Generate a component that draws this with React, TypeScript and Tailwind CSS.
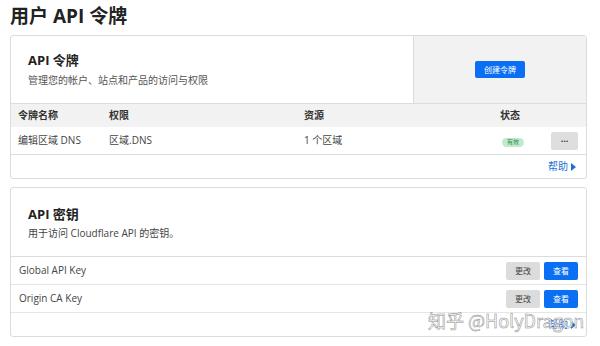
const font = { fontFamily: '"Open Sans", "Noto Sans CJK SC", sans-serif' };

function HelpLink() {
    return (
        <div className="h-[23px] flex items-center justify-end pr-[10px] text-[10px] text-[#1d6fd6]">
            帮助
            <svg className="ml-[3px]" width="5" height="8" viewBox="0 0 5 8">
                <path d="M0 0 L5 4 L0 8 Z" fill="#1d6fd6" />
            </svg>
        </div>
    );
}

const keys = ["Global API Key", "Origin CA Key"];

export default function App() {
    return (
        <div className="relative w-[600px] h-[346px] bg-white text-[#333] overflow-hidden" style={font}>
            <h1 className="pl-[10px] pt-[4px] h-[35px] text-[19px] font-bold leading-[24px] text-[#222]">用户 API 令牌</h1>

            <div className="ml-[10px] w-[577px] border border-[#dcdcdc] rounded-[3px]">
                <div className="flex h-[68px] border-b border-[#dcdcdc]">
                    <div className="flex-1 pl-[17px] pt-[15px]">
                        <div className="text-[13px] font-bold leading-[18px] text-[#222]">API 令牌</div>
                        <div className="mt-[4px] text-[10px] leading-[14px] text-[#555]">管理您的帐户、站点和产品的访问与权限</div>
                    </div>
                    <div className="w-[173px] bg-[#f2f2f2] border-l border-[#dcdcdc] flex items-center justify-center">
                        <button className="w-[50px] h-[17px] bg-[#0b6ff3] text-white text-[8px] rounded-[2px]">创建令牌</button>
                    </div>
                </div>
                <div className="flex items-center h-[23px] bg-[#f2f2f2] pl-[7px] text-[10px] font-bold text-[#333]">
                    <div className="w-[91px]">令牌名称</div>
                    <div className="w-[195px]">权限</div>
                    <div className="w-[196px]">资源</div>
                    <div>状态</div>
                </div>
                <div className="flex items-center h-[28px] pl-[7px] text-[10px] text-[#444] border-b border-[#dcdcdc]">
                    <div className="w-[91px]">编辑区域 DNS</div>
                    <div className="w-[195px]">区域.DNS</div>
                    <div className="w-[196px]">1 个区域</div>
                    <div className="w-[51px] pl-[2px]">
                        <span className="inline-flex items-center justify-center w-[22px] h-[9px] rounded-full bg-[#bfeacd] text-[#2a8a4c] text-[6px]">有效</span>
                    </div>
                    <button className="w-[27px] h-[18px] bg-[#dedede] rounded-[2px] text-[9px] font-bold leading-[10px] text-[#333]">···</button>
                </div>
                <HelpLink />
            </div>

            <div className="ml-[10px] mt-[8px] w-[577px] border border-[#dcdcdc] rounded-[3px]">
                <div className="h-[69px] pl-[17px] pt-[17px] border-b border-[#dcdcdc]">
                    <div className="text-[13px] font-bold leading-[18px] text-[#222]">API 密钥</div>
                    <div className="mt-[3px] text-[10px] leading-[14px] text-[#444]">用于访问 Cloudflare API 的密钥。</div>
                </div>
                {keys.map((k) => (
                    <div key={k} className="flex items-center h-[28px] pl-[8px] pr-[8px] border-b border-[#e6e6e6] last:border-[#dcdcdc] text-[10px] text-[#444]">
                        <div className="flex-1">{k}</div>
                        <button className="w-[34px] h-[18px] bg-[#dcdcdc] rounded-[2px] text-[8px] text-[#444]">更改</button>
                        <button className="ml-[4px] w-[34px] h-[18px] bg-[#0b6ff3] rounded-[2px] text-[8px] text-white">查看</button>
                    </div>
                ))}
                <HelpLink />
            </div>

            <div className="absolute left-[428px] top-[308px] text-[18px] leading-[24px] text-white/80 [-webkit-text-stroke:0.5px_#8a8a8a]" style={{ fontFamily: '"Noto Sans CJK SC", "Open Sans", sans-serif' }}>
                知乎 @HolyDragon
            </div>
        </div>
    );
}
